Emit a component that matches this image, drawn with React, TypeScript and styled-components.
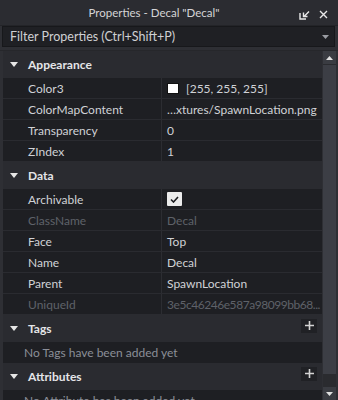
import React from 'react'
import styled, { createGlobalStyle } from 'styled-components'

const GlobalStyle = createGlobalStyle`
  html, body {
    margin: 0;
    padding: 0;
    background: #2e2f34;
  }
  * {
    box-sizing: border-box;
  }
`

const Window = styled.div`
  width: 338px;
  height: 400px;
  overflow: hidden;
  display: flex;
  flex-direction: column;
  background: #2e2f34;
  font-family: Lato, 'Noto Sans', sans-serif;
  font-size: 12px;
  color: #d2d4d8;
`

const TitleBar = styled.div`
  position: relative;
  height: 26px;
  flex-shrink: 0;
  display: flex;
  align-items: center;
  justify-content: center;
  background: #2b2c31;
  border-bottom: 1px solid #232428;
`

const Title = styled.div`
  color: #d4d4d6;
  font-size: 11.5px;
  margin-left: -30px;
`

const TitleIcons = styled.div`
  position: absolute;
  right: 10px;
  top: 9px;
  display: flex;
  align-items: center;
  gap: 9px;
`

const FilterBox = styled.div`
  margin: 0 3px 0 2px;
  height: 21px;
  flex-shrink: 0;
  display: flex;
  align-items: center;
  justify-content: space-between;
  padding: 0 5px 0 7px;
  background: #1f2024;
  border: 1px solid #17181b;
  color: #cfd0d3;
  font-size: 12.5px;
`

const Body = styled.div`
  flex: 1;
  min-height: 0;
  display: flex;
  margin-top: 3px;
  padding-left: 3px;
  border-top: 1px solid #26272b;
`

const List = styled.div`
  flex: 1;
  min-width: 0;
  display: flex;
  flex-direction: column;
`

const SectionHeader = styled.div`
  height: 27px;
  flex-shrink: 0;
  display: flex;
  align-items: center;
  padding-left: 7px;
  padding-right: 5px;
  background: #2a2b30;
`

const SectionTitle = styled.div`
  flex: 1;
  margin-left: 10px;
  font-weight: 700;
  color: #e4e5e8;
`

const AddButton = styled.div`
  width: 16px;
  height: 14px;
  display: flex;
  align-items: center;
  justify-content: center;
  background: #202125;
  margin-top: -6px;
`

const Row = styled.div`
  height: 21px;
  flex-shrink: 0;
  display: grid;
  grid-template-columns: 159px 1fr;
  background: #1e1f23;
  border-bottom: 1px solid #2a2b30;
`

const Name = styled.div<{ $disabled?: boolean }>`
  padding-left: 25px;
  display: flex;
  align-items: center;
  border-right: 1px solid #2c2d32;
  color: ${props => (props.$disabled ? '#5f6269' : '#d0d2d6')};
  white-space: nowrap;
`

const Value = styled.div<{ $disabled?: boolean; $tight?: boolean }>`
  padding-left: 5px;
  display: flex;
  align-items: center;
  gap: 7px;
  color: ${props => (props.$disabled ? '#5f6269' : '#d0d2d6')};
  letter-spacing: ${props => (props.$tight ? '-0.45px' : 'normal')};
  white-space: nowrap;
  overflow: hidden;
`

const Swatch = styled.span`
  width: 12px;
  height: 11px;
  background: #ffffff;
  border: 1px solid #111;
`

const CheckBox = styled.span`
  width: 15px;
  height: 14px;
  display: flex;
  align-items: center;
  justify-content: center;
  background: #ececec;
  border-radius: 1px;
`

const Empty = styled.div`
  height: 21px;
  flex-shrink: 0;
  display: flex;
  align-items: center;
  padding-left: 21px;
  background: #1e1f23;
  color: #8b8f98;
`

const ScrollBar = styled.div`
  width: 13px;
  margin: 0 2px 0 1px;
  display: flex;
  flex-direction: column;
  background: #2a2b2f;
`

const ScrollButton = styled.div`
  height: 13px;
  display: flex;
  align-items: center;
  justify-content: center;
  background: #3a3c42;
`

const Thumb = styled.div`
  height: 309px;
  margin-top: 1px;
  background: #3c3e45;
`

const Track = styled.div`
  flex: 1;
`

type Prop = {
  name: string
  value: React.ReactNode
  disabled?: boolean
  tight?: boolean
}

const appearance: Prop[] = [
  {
    name: 'Color3',
    value: (
      <>
        <Swatch />
        [255, 255, 255]
      </>
    ),
  },
  { name: 'ColorMapContent', value: '…xtures/SpawnLocation.png' },
  { name: 'Transparency', value: '0' },
  { name: 'ZIndex', value: '1' },
]

const data: Prop[] = [
  {
    name: 'Archivable',
    value: (
      <CheckBox>
        <svg width='9' height='7' viewBox='0 0 9 7'>
          <path d='M1 3.5 L3.5 6 L8 1' stroke='#1c1d21' strokeWidth='1.6' fill='none' />
        </svg>
      </CheckBox>
    ),
  },
  { name: 'ClassName', value: 'Decal', disabled: true },
  { name: 'Face', value: 'Top' },
  { name: 'Name', value: 'Decal' },
  { name: 'Parent', value: 'SpawnLocation' },
  { name: 'UniqueId', value: '3e5c46246e587a98099bb68...', disabled: true, tight: true },
]

const Arrow = () => (
  <svg width='8' height='5' viewBox='0 0 8 5'>
    <path d='M0 0 H8 L4 5 Z' fill='#e6e6e6' />
  </svg>
)

const Section = ({ title, add, children }: { title: string; add?: boolean; children: React.ReactNode }) => (
  <>
    <SectionHeader>
      <Arrow />
      <SectionTitle>{title}</SectionTitle>
      {add && (
        <AddButton>
          <svg width='9' height='9' viewBox='0 0 9 9'>
            <path d='M4.5 0 V9 M0 4.5 H9' stroke='#d4d4d4' strokeWidth='1.6' />
          </svg>
        </AddButton>
      )}
    </SectionHeader>
    {children}
  </>
)

const PropRows = ({ items }: { items: Prop[] }) => (
  <>
    {items.map(p => (
      <Row key={p.name}>
        <Name $disabled={p.disabled}>{p.name}</Name>
        <Value $disabled={p.disabled} $tight={p.tight}>{p.value}</Value>
      </Row>
    ))}
  </>
)

const App: React.FC = () => {
  return (
    <>
      <GlobalStyle />
      <Window>
        <TitleBar>
          <Title>Properties - Decal "Decal"</Title>
          <TitleIcons>
            <svg width='11' height='11' viewBox='0 0 11 11'>
              <path d='M1 4 V10 H7' stroke='#e8e8e8' strokeWidth='1.4' fill='none' />
              <path d='M5 7.5 L10 2.5 M4.5 3.5 V7.5 H8.5' stroke='#e8e8e8' strokeWidth='1.4' fill='none' />
            </svg>
            <svg width='9' height='9' viewBox='0 0 9 9'>
              <path d='M1 1 L8 8 M8 1 L1 8' stroke='#e8e8e8' strokeWidth='1.4' />
            </svg>
          </TitleIcons>
        </TitleBar>

        <FilterBox>
          <span>Filter Properties (Ctrl+Shift+P)</span>
          <svg width='7' height='4' viewBox='0 0 7 4'>
            <path d='M0 0 H7 L3.5 4 Z' fill='#9a9ca2' />
          </svg>
        </FilterBox>

        <Body>
          <List>
            <Section title='Appearance'>
              <PropRows items={appearance} />
            </Section>
            <Section title='Data'>
              <PropRows items={data} />
            </Section>
            <Section title='Tags' add>
              <Empty>No Tags have been added yet</Empty>
            </Section>
            <Section title='Attributes' add>
              <Empty>No Attribute has been added yet</Empty>
            </Section>
          </List>

          <ScrollBar>
            <ScrollButton>
              <svg width='7' height='4' viewBox='0 0 7 4'>
                <path d='M0 4 H7 L3.5 0 Z' fill='#e0e0e0' />
              </svg>
            </ScrollButton>
            <Thumb />
            <Track />
            <ScrollButton>
              <svg width='7' height='4' viewBox='0 0 7 4'>
                <path d='M0 0 H7 L3.5 4 Z' fill='#e0e0e0' />
              </svg>
            </ScrollButton>
          </ScrollBar>
        </Body>
      </Window>
    </>
  )
}

export default App
